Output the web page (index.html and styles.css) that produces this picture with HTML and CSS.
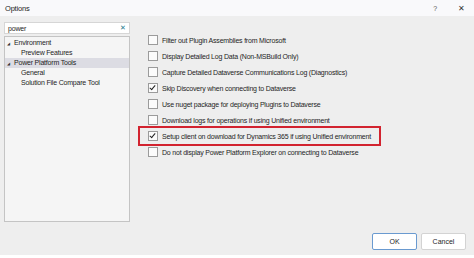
FILE: index.html
```html
<!DOCTYPE html>
<html lang="en">
<head>
  <meta charset="UTF-8">
  <title>Options</title>
  <link rel="stylesheet" href="styles.css">
</head>
<body>
  <div class="dialog">
    <div class="titlebar">
      <span class="title">Options</span>
      <span class="title-btn help">?</span>
      <span class="title-btn close">✕</span>
    </div>

    <div class="main">
      <div class="sidebar">
        <div class="search">
          <span>power</span>
          <span class="clear">✕</span>
        </div>
        <ul class="tree">
          <li class="node"><span class="arrow">◢</span>Environment</li>
          <li class="leaf">Preview Features</li>
          <li class="node selected"><span class="arrow">◢</span>Power Platform Tools</li>
          <li class="leaf">General</li>
          <li class="leaf">Solution File Compare Tool</li>
        </ul>
      </div>

      <div class="options">
        <label class="option"><span class="box"></span>Filter out Plugin Assemblies from Microsoft</label>
        <label class="option"><span class="box"></span>Display Detailed Log Data (Non-MSBuild Only)</label>
        <label class="option"><span class="box"></span>Capture Detailed Dataverse Communications Log (Diagnostics)</label>
        <label class="option"><span class="box checked"></span>Skip Discovery when connecting to Dataverse</label>
        <label class="option"><span class="box"></span>Use nuget package for deploying Plugins to Dataverse</label>
        <label class="option"><span class="box"></span>Download logs for operations if using Unified environment</label>
        <label class="option marked"><span class="box checked"></span>Setup client on download for Dynamics 365 if using Unified environment</label>
        <label class="option"><span class="box"></span>Do not display Power Platform Explorer on connecting to Dataverse</label>
      </div>
    </div>

    <div class="footer">
      <button class="btn default">OK</button>
      <button class="btn">Cancel</button>
    </div>
  </div>
</body>
</html>
```

FILE: styles.css
```css
body {
  margin: 0;
  font-family: 'Liberation Sans', Arial, sans-serif;
  font-size: 7px;
  letter-spacing: -0.2px;
  color: #1e1e1e;
  background: #ffffff;
}
.dialog {
  width: 474px;
  height: 255px;
  background: #eeeeee;
  display: flex;
  flex-direction: column;
}
.titlebar {
  height: 16px;
  background: #f9f9fb;
  display: flex;
  align-items: center;
  padding-left: 5px;
  font-size: 7.5px;
}
.title {
  flex: 1;
}
.title-btn {
  width: 26px;
  text-align: center;
  color: #555;
}
.help {
  font-size: 7px;
}
.close {
  font-size: 8px;
  color: #333;
}
.main {
  flex: 1;
  display: flex;
  padding: 6px 0 0 4px;
}
.sidebar {
  width: 126px;
  display: flex;
  flex-direction: column;
}
.search {
  height: 12px;
  box-sizing: border-box;
  background: #ffffff;
  border: 1px solid #d6d6d6;
  display: flex;
  align-items: center;
  justify-content: space-between;
  padding: 0 3px;
}
.clear {
  color: #1c7a8c;
  font-size: 7px;
}
.tree {
  list-style: none;
  margin: 2px 0 0 0;
  padding: 1px 0;
  height: 186px;
  box-sizing: border-box;
  background: #f5f5f5;
  border: 1px solid #c4c4c4;
}
.tree li {
  height: 10px;
  line-height: 10px;
  white-space: nowrap;
}
.node {
  padding-left: 2px;
}
.leaf {
  padding-left: 16px;
}
.selected {
  background: #dcdce3;
}
.arrow {
  display: inline-block;
  width: 7px;
  font-size: 4px;
  color: #333;
}
.options {
  display: flex;
  flex-direction: column;
  align-items: flex-start;
  padding: 0 0 0 10px;
  margin-top: 10px;
}
.option {
  height: 16px;
  display: flex;
  align-items: center;
  padding: 0 8px;
  white-space: nowrap;
}
.box {
  width: 8px;
  height: 8px;
  background: #fbfbfb;
  border: 1px solid #9b9b9b;
  margin-right: 4px;
  position: relative;
}
.box.checked::after {
  content: "";
  position: absolute;
  left: 2px;
  top: 0px;
  width: 2px;
  height: 5px;
  border: solid #222;
  border-width: 0 1px 1px 0;
  transform: rotate(40deg);
}
.marked {
  outline: 2px solid #d2232f;
}
.footer {
  display: flex;
  justify-content: flex-end;
  gap: 4px;
  padding: 0 8px 5px 0;
}
.btn {
  width: 45px;
  height: 17px;
  font-family: inherit;
  font-size: 7px;
  background: #ffffff;
  border: 1px solid #d3d3d3;
  border-radius: 2px;
  color: #1e1e1e;
}
.btn.default {
  border-color: #6a9ad0;
}
```
